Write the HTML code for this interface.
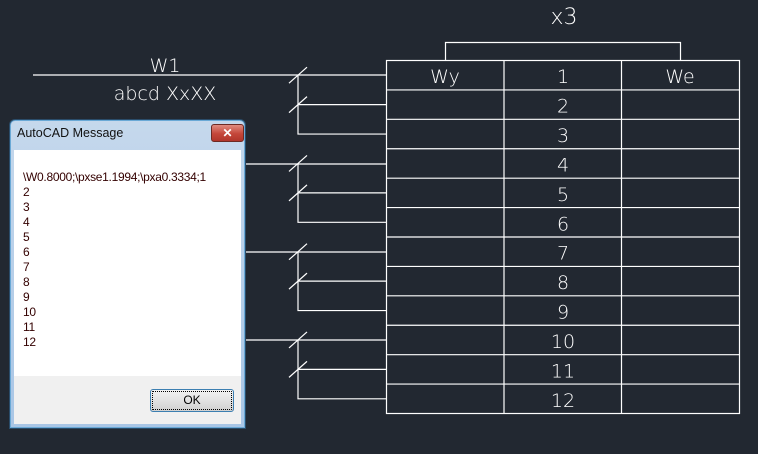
<!DOCTYPE html>
<html><head><style>
html,body{margin:0;padding:0;width:758px;height:454px;overflow:hidden;background:#222831;}
svg{position:absolute;left:0;top:0}
.t{font-family:"DejaVu Sans","Liberation Sans",sans-serif;font-weight:200;fill:#fff;font-size:19px}
#dlg{position:absolute;left:10px;top:120px;width:233px;height:306px;border:1px solid #6aa9d6;border-radius:5px 5px 0 0;background:linear-gradient(#c5d8ec,#a9c6e6);box-shadow:0 0 0 1px #2a4c6a;}
#title{position:absolute;left:6px;top:5px;font:12.5px "Liberation Sans",sans-serif;color:#111}
#close{position:absolute;left:200px;top:3px;width:31px;height:16px;border-radius:3px;background:linear-gradient(#e08c80,#c4463a 55%,#b0352b);border:1px solid #6d2a24;color:#fff;font:bold 12px "Liberation Sans",sans-serif;text-align:center;line-height:16px}
#body{position:absolute;left:3px;top:29px;width:227px;height:226px;background:#fff}
#foot{position:absolute;left:3px;top:255px;width:227px;height:48px;background:#f0f0f0}
#msg{position:absolute;left:9px;top:20px;font:12px/15px "Liberation Sans",sans-serif;color:#300;letter-spacing:-0.3px}
#ok{position:absolute;left:136px;top:13px;width:82px;height:21px;border:1px solid #3c7fb1;border-radius:3px;background:linear-gradient(#f2f2f2,#e2e2e2 50%,#d0d0d0);font:12px "Liberation Sans",sans-serif;text-align:center;line-height:21px;color:#000;outline:1px dotted #000;outline-offset:-3px}
</style></head><body>
<svg width="758" height="454" stroke="#fff" stroke-width="1.2" fill="none">
<rect x="386.5" y="60.5" width="353" height="353"/>
<line x1="504" y1="60.5" x2="504" y2="413.5"/>
<line x1="621.5" y1="60.5" x2="621.5" y2="413.5"/>
<g id="rows"></g>
<polyline points="445.5,60.5 445.5,42.5 680.5,42.5 680.5,60.5"/>
<line x1="33" y1="75" x2="386" y2="75"/>
<line x1="245" y1="164" x2="386" y2="164"/>
<line x1="245" y1="252" x2="386" y2="252"/>
<line x1="245" y1="340" x2="386" y2="340"/>
<g id="br"></g>
<g stroke="none" class="t">
<text x="165" y="72" text-anchor="middle">W1</text>
<text x="165" y="100" text-anchor="middle">abcd XxXX</text>
<text x="564" y="24" text-anchor="middle" font-size="22">x3</text>
<text x="445" y="83" text-anchor="middle">Wy</text>
<text x="680" y="83" text-anchor="middle">We</text>
</g>
<g id="nums" stroke="none" class="t"></g>
</svg>
<div id="dlg"><div id="title">AutoCAD Message</div><div id="close">✕</div>
<div id="body"><div id="msg">\W0.8000;\pxse1.1994;\pxa0.3334;1<br>2<br>3<br>4<br>5<br>6<br>7<br>8<br>9<br>10<br>11<br>12</div></div>
<div id="foot"><div id="ok">OK</div></div></div>
<script>
var ns="http://www.w3.org/2000/svg",h=353/12;
function el(p,t,a,tx){var e=document.createElementNS(ns,t);for(var k in a)e.setAttribute(k,a[k]);if(tx)e.textContent=tx;document.getElementById(p).appendChild(e);}
for(var i=1;i<12;i++){var y=60.5+i*h;el("rows","line",{x1:386.5,y1:y,x2:739.5,y2:y});}
for(var i=0;i<12;i++){var y=60.5+(i+0.5)*h;el("nums","text",{x:563,y:y+8,"text-anchor":"middle"},String(i+1));}
for(var g=0;g<4;g++){var y0=60.5+(g*3+0.5)*h,y1=y0+h,y2=y0+2*h;
el("br","polyline",{points:"386,"+y1+" 298,"+y1+" 298,"+y0});
el("br","polyline",{points:"298,"+y1+" 298,"+y2+" 386,"+y2});
el("br","line",{x1:289,y1:y0+8,x2:307,y2:y0-8});
el("br","line",{x1:289,y1:y1+8,x2:307,y2:y1-8});}
</script>
</body></html>
